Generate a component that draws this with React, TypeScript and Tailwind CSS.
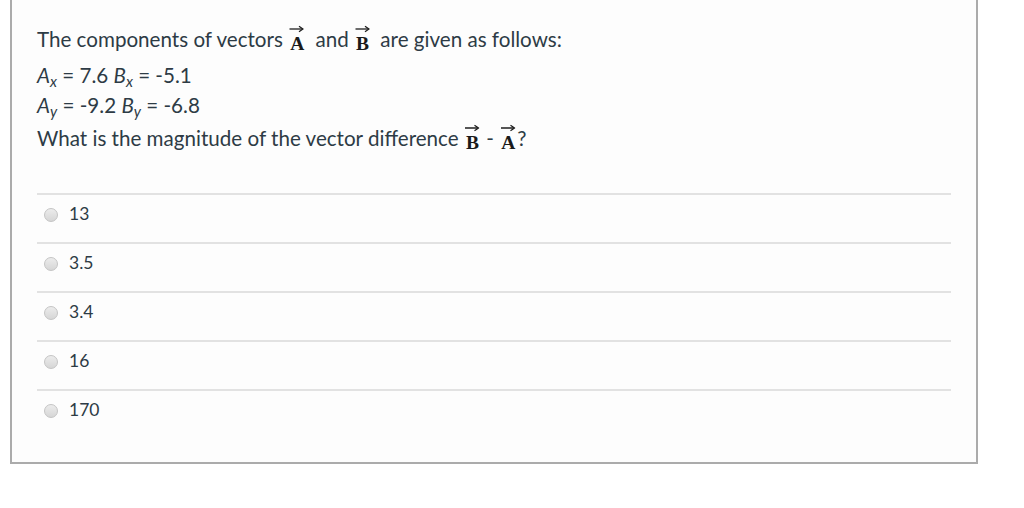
import React from 'react'

function Vec({ letter, wide }: { letter: string; wide?: boolean }) {
  return (
    <span
      className={
        wide
          ? 'relative top-[3px] pl-[2px] pr-[6px] font-bold text-[19.5px] leading-none text-[#1a1a1a]'
          : 'relative top-[3px] px-[2px] font-bold text-[19.5px] leading-none text-[#1a1a1a]'
      }
      style={{ fontFamily: '"Liberation Serif", serif' }}
    >
      <span className={wide ? 'absolute left-[1px] top-[-8px] flex' : 'absolute left-1/2 -translate-x-1/2 top-[-8px] flex'}>
        <svg width="15" height="8" viewBox="0 0 15 8">
          <path d="M0.5 4 H13.5" stroke="#1e1e1e" strokeWidth="1.3" />
          <path d="M10 1.2 L14 4 L10 6.8" stroke="#1e1e1e" strokeWidth="1.3" fill="none" />
        </svg>
      </span>
      {letter}
    </span>
  )
}

const options = ['13', '3.5', '3.4', '16', '170']

export default function App() {
  return (
    <div className="w-[1024px] h-[508px] bg-white" style={{ fontFamily: 'Lato, "Liberation Sans", sans-serif' }}>
      <div className="ml-[10px] w-[968px] h-[464px] flex flex-col border-x-2 border-b-2 border-[#ababab] bg-[#fdfdfd] text-[#2d3b45]">
        <div className="pl-[25px] pt-[26px] text-[20.6px]">
          <p className="leading-[26px]">
            The components of vectors <Vec letter="A" wide /> and <Vec letter="B" wide /> are given as follows:
          </p>
          <p className="mt-[8px] leading-[30px]">
            <i>A</i>
            <sub className="italic text-[15px]">x</sub> = 7.6 <i>B</i>
            <sub className="italic text-[15px]">x</sub> = -5.1
          </p>
          <p className="leading-[30px]">
            <i>A</i>
            <sub className="italic text-[15px]">y</sub> = -9.2 <i>B</i>
            <sub className="italic text-[15px]">y</sub> = -6.8
          </p>
          <p className="mt-[3px] leading-[30px]">
            What is the magnitude of the vector difference <Vec letter="B" /> - <Vec letter="A" />?
          </p>
        </div>
        <div className="ml-[25px] w-[914px] mt-[40px] flex flex-col">
          {options.map((o) => (
            <label key={o} className="h-[49px] border-t-2 border-[#e2e2e2] flex items-center gap-[11px] pl-[7px] pb-[8px]">
              <span className="w-[14px] h-[14px] rounded-full border border-[#c4c4c4] bg-gradient-to-b from-[#ececec] to-[#d6d6d6]" />
              <span className="text-[17.5px]">{o}</span>
            </label>
          ))}
        </div>
      </div>
    </div>
  )
}
